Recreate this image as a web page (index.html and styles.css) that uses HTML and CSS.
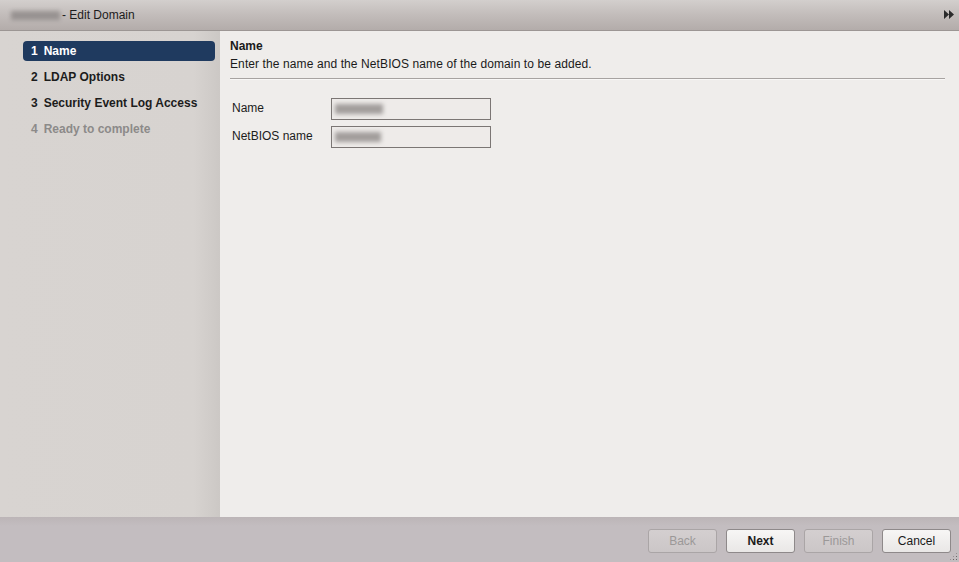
FILE: index.html
```html
<!DOCTYPE html>
<html>
<head>
<meta charset="utf-8">
<link rel="stylesheet" href="styles.css">
</head>
<body>
<div class="dialog">
  <div class="titlebar">
    <span class="blur-name"></span>
    <span class="title">- Edit Domain</span>
    <svg class="expand" width="10" height="9" viewBox="0 0 10 9"><path d="M0 0 L5 4.5 L0 9 Z M5 0 L10 4.5 L5 9 Z" fill="#2b2b2b"/></svg>
  </div>
  <div class="body">
    <div class="sidebar">
      <div class="step active"><span class="num">1</span>Name</div>
      <div class="step"><span class="num">2</span>LDAP Options</div>
      <div class="step"><span class="num">3</span>Security Event Log Access</div>
      <div class="step disabled"><span class="num">4</span>Ready to complete</div>
    </div>
    <div class="main">
      <div class="heading">Name</div>
      <div class="desc">Enter the name and the NetBIOS name of the domain to be added.</div>
      <div class="rule"></div>
      <div class="form">
        <label class="lbl">Name</label>
        <div class="input"><span class="blur w1"></span></div>
        <label class="lbl">NetBIOS name</label>
        <div class="input"><span class="blur w2"></span></div>
      </div>
    </div>
  </div>
  <div class="footer">
    <button class="btn" disabled>Back</button>
    <button class="btn primary">Next</button>
    <button class="btn" disabled>Finish</button>
    <button class="btn">Cancel</button>
    <span class="grip"></span>
  </div>
</div>
</body>
</html>
```

FILE: styles.css
```css
html, body {
  margin: 0;
  padding: 0;
}
body {
  width: 959px;
  height: 562px;
  overflow: hidden;
  font-family: "Liberation Sans", Arial, sans-serif;
  font-size: 12px;
  color: #1a1a1a;
}
.dialog {
  display: flex;
  flex-direction: column;
  width: 959px;
  height: 562px;
}
.titlebar {
  height: 30px;
  flex: none;
  display: flex;
  align-items: center;
  background: linear-gradient(#d3cfcd, #c2bcba 50%, #b3acaa);
  border-bottom: 1px solid #9c9694;
  position: relative;
}
.blur-name {
  display: inline-block;
  width: 49px;
  height: 9px;
  margin-left: 11px;
  margin-right: 2px;
  background: #8d8887;
  filter: blur(2px);
  opacity: 0.8;
}
.title {
  font-size: 12px;
  color: #1c1c1c;
  margin-top: -1px;
}
.expand {
  position: absolute;
  right: 5px;
  top: 10px;
}
.body {
  flex: 1;
  display: flex;
  min-height: 0;
}
.sidebar {
  width: 220px;
  flex: none;
  background: linear-gradient(90deg, #d8d4d1 0%, #d7d3d0 88%, #ccc8c5 100%);
  padding-top: 10px;
  box-sizing: border-box;
}
.step {
  height: 20px;
  line-height: 20px;
  margin: 0 5px 6px 23px;
  padding-left: 8px;
  font-weight: bold;
  color: #1c1c1c;
  border-radius: 4px;
}
.step .num {
  margin-right: 6px;
}
.step.active {
  background: #1f3a5f;
  color: #ffffff;
}
.step.disabled {
  color: #8c8a89;
}
.main {
  flex: 1;
  background: #efedeb;
  padding: 8px 14px 0 10px;
}
.heading {
  font-weight: bold;
  line-height: 14px;
}
.desc {
  margin-top: 4px;
  line-height: 14px;
  letter-spacing: 0.1px;
}
.rule {
  height: 1px;
  background: #a7a3a1;
  margin-top: 7px;
  border-bottom: 1px solid #f8f7f6;
}
.form {
  display: grid;
  grid-template-columns: 101px 160px;
  row-gap: 6px;
  margin-top: 18px;
  align-items: center;
}
.lbl {
  padding-left: 2px;
  padding-bottom: 3px;
  color: #1c1c1c;
}
.input {
  border: 1px solid #7b7674;
  background: #eeebe9;
  box-sizing: border-box;
  height: 22px;
  display: flex;
  align-items: center;
}
.blur {
  display: inline-block;
  height: 10px;
  margin-left: 3px;
  background: #a29e9c;
  filter: blur(2px);
}
.w1 { width: 48px; }
.w2 { width: 46px; }
.footer {
  height: 45px;
  flex: none;
  display: flex;
  justify-content: flex-end;
  align-items: center;
  gap: 9px;
  padding-right: 8px;
  padding-top: 3px;
  box-sizing: border-box;
  background: linear-gradient(#bcb5b7, #c3bdc0 20%, #c3bdc0);
  position: relative;
}
.btn {
  width: 69px;
  height: 24px;
  font-family: "Liberation Sans", Arial, sans-serif;
  font-size: 12px;
  color: #1a1a1a;
  background: linear-gradient(#f7f6f5, #e9e7e6);
  border: 1px solid #8e898a;
  border-radius: 3px;
  padding: 0;
}
.btn.primary {
  font-weight: bold;
}
.btn:disabled {
  color: #9b9898;
  background: linear-gradient(#d4cfd0, #cbc6c7);
  border-color: #aaa5a6;
}
.grip {
  position: absolute;
  right: 1px;
  bottom: 1px;
  width: 9px;
  height: 9px;
  background: radial-gradient(circle, #6a6566 0.8px, transparent 1px) 0 0 / 3px 3px;
  clip-path: polygon(100% 0, 100% 100%, 0 100%);
}
```
